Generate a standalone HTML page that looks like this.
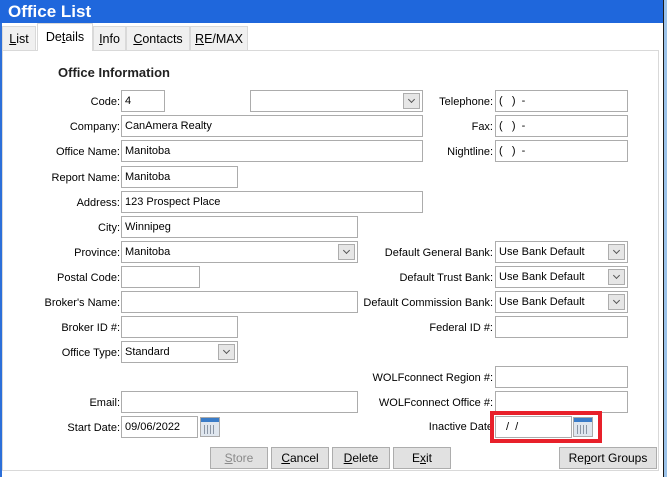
<!DOCTYPE html>
<html><head><style>
*{margin:0;padding:0;box-sizing:border-box}
body{width:667px;height:477px;background:#fff;font-family:"Liberation Sans",sans-serif;font-size:11px;color:#000;position:relative;overflow:hidden}
.a{position:absolute}
.t{position:absolute;height:22px;line-height:22px;margin-top:1px;text-align:right;white-space:nowrap}
.i{position:absolute;height:22px;border:1px solid #acacac;background:#fff;line-height:20px;padding-left:3px;white-space:nowrap}
.dd{position:absolute;right:2px;top:2px;width:17px;height:16px;background:#e6e6e6;border:1px solid #adadad}
.dd:after{content:"";position:absolute;left:5px;top:3px;width:4px;height:4px;border-right:1px solid #555;border-bottom:1px solid #555;transform:rotate(45deg)}
.tab{position:absolute;top:26px;height:24px;background:#f0f0f0;border:1px solid #d9d9d9;border-bottom:none;line-height:24px;text-align:center;font-size:12.5px}
.btn{position:absolute;top:447px;height:22px;background:#e1e1e1;border:1px solid #adadad;text-align:center;line-height:20px;font-size:12px}
.cal{position:absolute;width:20px;height:20px;border:1px solid #aaa;background:linear-gradient(#3a7cc8 0,#3a7cc8 4px,#dfe6ee 4px);}
.cal:after{content:"";position:absolute;left:3px;top:7px;width:12px;height:9px;background:repeating-linear-gradient(90deg,#8a95a4 0 1px,transparent 1px 3px)}
</style></head><body>
<div class="a" style="left:0;top:0;width:663px;height:23px;background:#1f67dc;color:#fff;font-weight:bold;font-size:17px;line-height:23px;padding-left:8px">Office List</div>
<div class="a" style="left:663px;top:0;width:4px;height:477px;background:#9cc3ea;border-left:1px solid #1a1a1a"></div>
<div class="a" style="left:0;top:23px;width:2px;height:454px;background:#2c6fd9"></div>
<div class="a" style="left:2px;top:50px;width:657px;height:421px;border:1px solid #d9d9d9"></div>
<div class="tab" style="left:2px;width:34px"><u>L</u>ist</div>
<div class="tab" style="left:37px;top:23px;height:28px;width:56px;background:#fff;line-height:26px">De<u>t</u>ails</div>
<div class="tab" style="left:93px;width:33px"><u>I</u>nfo</div>
<div class="tab" style="left:126px;width:64px"><u>C</u>ontacts</div>
<div class="tab" style="left:190px;width:58px"><u>R</u>E/MAX</div>
<div class="a" style="left:58px;top:65px;font-weight:bold;font-size:13px;color:#222">Office Information</div>

<div class="t" style="right:547px;top:90px">Code:</div><div class="i" style="left:121px;top:90px;width:44px">4</div>
<div class="i" style="left:250px;top:90px;width:173px"><div class="dd"></div></div>
<div class="t" style="right:547px;top:115px">Company:</div><div class="i" style="left:121px;top:115px;width:302px">CanAmera Realty</div>
<div class="t" style="right:547px;top:140px">Office Name:</div><div class="i" style="left:121px;top:140px;width:302px">Manitoba</div>
<div class="t" style="right:547px;top:166px">Report Name:</div><div class="i" style="left:121px;top:166px;width:117px">Manitoba</div>
<div class="t" style="right:547px;top:191px">Address:</div><div class="i" style="left:121px;top:191px;width:302px">123 Prospect Place</div>
<div class="t" style="right:547px;top:216px">City:</div><div class="i" style="left:121px;top:216px;width:237px">Winnipeg</div>
<div class="t" style="right:547px;top:241px">Province:</div><div class="i" style="left:121px;top:241px;width:237px">Manitoba<div class="dd"></div></div>
<div class="t" style="right:547px;top:266px">Postal Code:</div><div class="i" style="left:121px;top:266px;width:79px"></div>
<div class="t" style="right:547px;top:291px">Broker's Name:</div><div class="i" style="left:121px;top:291px;width:237px"></div>
<div class="t" style="right:547px;top:316px">Broker ID #:</div><div class="i" style="left:121px;top:316px;width:117px"></div>
<div class="t" style="right:547px;top:341px">Office Type:</div><div class="i" style="left:121px;top:341px;width:117px">Standard<div class="dd"></div></div>
<div class="t" style="right:547px;top:391px">Email:</div><div class="i" style="left:121px;top:391px;width:237px"></div>
<div class="t" style="right:547px;top:416px">Start Date:</div><div class="i" style="left:121px;top:416px;width:77px">09/06/2022</div>
<div class="cal" style="left:200px;top:417px"></div>

<div class="t" style="right:174px;top:90px">Telephone:</div><div class="i" style="left:495px;top:90px;width:133px">(&nbsp;&nbsp;&nbsp;)&nbsp;&nbsp;-</div>
<div class="t" style="right:174px;top:115px">Fax:</div><div class="i" style="left:495px;top:115px;width:133px">(&nbsp;&nbsp;&nbsp;)&nbsp;&nbsp;-</div>
<div class="t" style="right:174px;top:140px">Nightline:</div><div class="i" style="left:495px;top:140px;width:133px">(&nbsp;&nbsp;&nbsp;)&nbsp;&nbsp;-</div>
<div class="t" style="right:174px;top:241px">Default General Bank:</div><div class="i" style="left:495px;top:241px;width:133px">Use Bank Default<div class="dd"></div></div>
<div class="t" style="right:174px;top:266px">Default Trust Bank:</div><div class="i" style="left:495px;top:266px;width:133px">Use Bank Default<div class="dd"></div></div>
<div class="t" style="right:174px;top:291px">Default Commission Bank:</div><div class="i" style="left:495px;top:291px;width:133px">Use Bank Default<div class="dd"></div></div>
<div class="t" style="right:174px;top:316px">Federal ID #:</div><div class="i" style="left:495px;top:316px;width:133px"></div>
<div class="t" style="right:174px;top:366px">WOLFconnect Region #:</div><div class="i" style="left:495px;top:366px;width:133px"></div>
<div class="t" style="right:174px;top:391px">WOLFconnect Office #:</div><div class="i" style="left:495px;top:391px;width:133px"></div>
<div class="t" style="right:174px;top:415px">Inactive Date</div>
<div class="i" style="left:495px;top:416px;width:77px;padding-left:10px">/&nbsp;&nbsp;/</div>
<div class="cal" style="left:573px;top:417px"></div>
<div class="a" style="left:490px;top:411px;width:112px;height:32px;border:4px solid #e8202a"></div>

<div class="btn" style="left:210px;width:58px;color:#8a8a8a"><u>S</u>tore</div>
<div class="btn" style="left:271px;width:58px"><u>C</u>ancel</div>
<div class="btn" style="left:332px;width:58px"><u>D</u>elete</div>
<div class="btn" style="left:393px;width:58px">E<u>x</u>it</div>
<div class="btn" style="left:559px;width:98px">Re<u>p</u>ort Groups</div>
</body></html>
